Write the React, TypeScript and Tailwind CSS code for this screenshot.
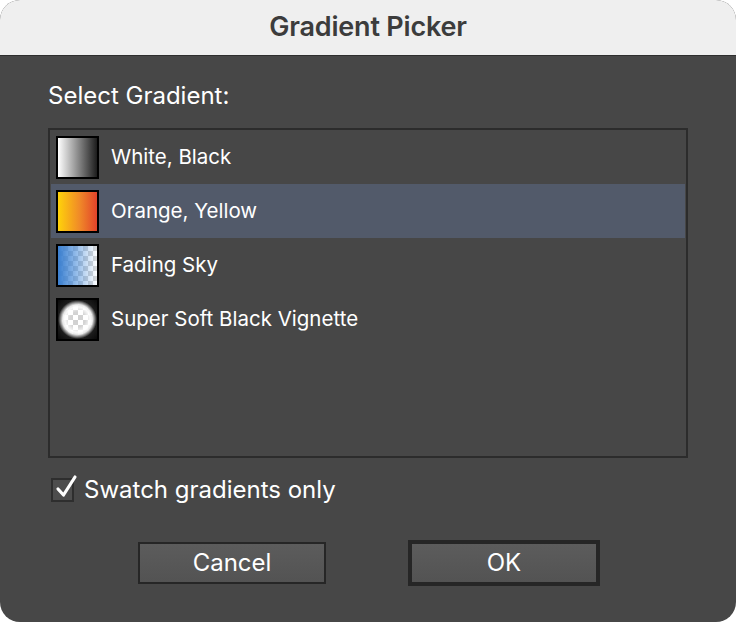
import React from "react";

const checker =
  "bg-[repeating-conic-gradient(#cfcfcf_0_25%,#ffffff_0_50%)] bg-[length:10px_10px]";

function Swatch({ kind }: { kind: string }) {
  return (
    <div className="relative w-[43px] h-[43px] border-2 border-black overflow-hidden shrink-0">
      {kind === "wb" && (
        <div className="absolute inset-0 bg-[linear-gradient(to_right,#ffffff,#1c1c1c)]" />
      )}
      {kind === "oy" && (
        <div className="absolute inset-0 bg-[linear-gradient(to_right,#ffd20a,#f08a28_55%,#e2432b)]" />
      )}
      {kind === "sky" && (
        <>
          <div className={`absolute inset-0 ${checker}`} />
          <div className="absolute inset-0 bg-[linear-gradient(to_right,#3a7fd0,rgba(70,140,220,0.55)_50%,rgba(255,255,255,0.15))]" />
        </>
      )}
      {kind === "vig" && (
        <>
          <div className={`absolute inset-0 ${checker}`} />
          <div className="absolute inset-0 bg-[radial-gradient(circle,rgba(255,255,255,0)_0%,rgba(255,255,255,0.1)_28%,rgba(255,255,255,0.9)_46%,rgba(235,235,235,0.85)_54%,#1c1c1c_70%,#0a0a0a_100%)]" />
        </>
      )}
    </div>
  );
}

const items = [
  { kind: "wb", name: "White, Black" },
  { kind: "oy", name: "Orange, Yellow" },
  { kind: "sky", name: "Fading Sky" },
  { kind: "vig", name: "Super Soft Black Vignette" },
];

export default function App() {
  return (
    <div className="w-[736px] h-[622px] bg-white font-['Inter','Noto_Sans',sans-serif]">
      <div className="w-full h-full rounded-[20px] overflow-hidden flex flex-col bg-[#474747]">
        <div className="h-[56px] bg-[#efefef] border-b border-[#2e2e2e] flex items-center justify-center shrink-0">
          <span className="text-[27px] font-semibold text-[#3c3c3c] tracking-[-0.2px]">
            Gradient Picker
          </span>
        </div>

        <div className="flex flex-col px-[48px] pt-[25px]">
          <div className="text-[24px] text-white leading-[30px]">Select Gradient:</div>

          <div className="mt-[17px] w-[640px] h-[330px] border-2 border-[#2c2c2c] bg-[#474747] px-[1px]">
            {items.map((it, i) => (
              <div
                key={it.name}
                className={`h-[54px] flex items-center gap-[12px] pl-[5px] ${
                  i === 1 ? "bg-[#525a6a]" : ""
                }`}
              >
                <Swatch kind={it.kind} />
                <span className="text-[20.5px] text-white">{it.name}</span>
              </div>
            ))}
          </div>

          <div className="mt-[19px] h-[26px] flex items-center gap-[10px] pl-[3px]">
            <div className="relative w-[23px] h-[24px] border-2 border-[#2e2e2e] bg-[#4d4d4d]">
              <svg
                viewBox="0 0 24 24"
                className="absolute left-[1px] top-[-6px] w-[24px] h-[26px]"
                fill="none"
                stroke="white"
                strokeWidth={3.2}
                strokeLinecap="round"
                strokeLinejoin="round"
              >
                <path d="M4 14 L9.5 20 L21 2" />
              </svg>
            </div>
            <span className="text-[24px] text-white leading-[26px]">Swatch gradients only</span>
          </div>

          <div className="mt-[37px] flex items-center">
            <button className="ml-[90px] w-[188px] h-[42px] border-2 border-[#262626] bg-[linear-gradient(#5c5c5c,#535353)] text-white text-[24px] flex items-center justify-center">
              Cancel
            </button>
            <button className="ml-[82px] w-[192px] h-[46px] border-4 border-[#262626] bg-[linear-gradient(#5c5c5c,#535353)] text-white text-[24px] flex items-center justify-center">
              OK
            </button>
          </div>
        </div>
      </div>
    </div>
  );
}
